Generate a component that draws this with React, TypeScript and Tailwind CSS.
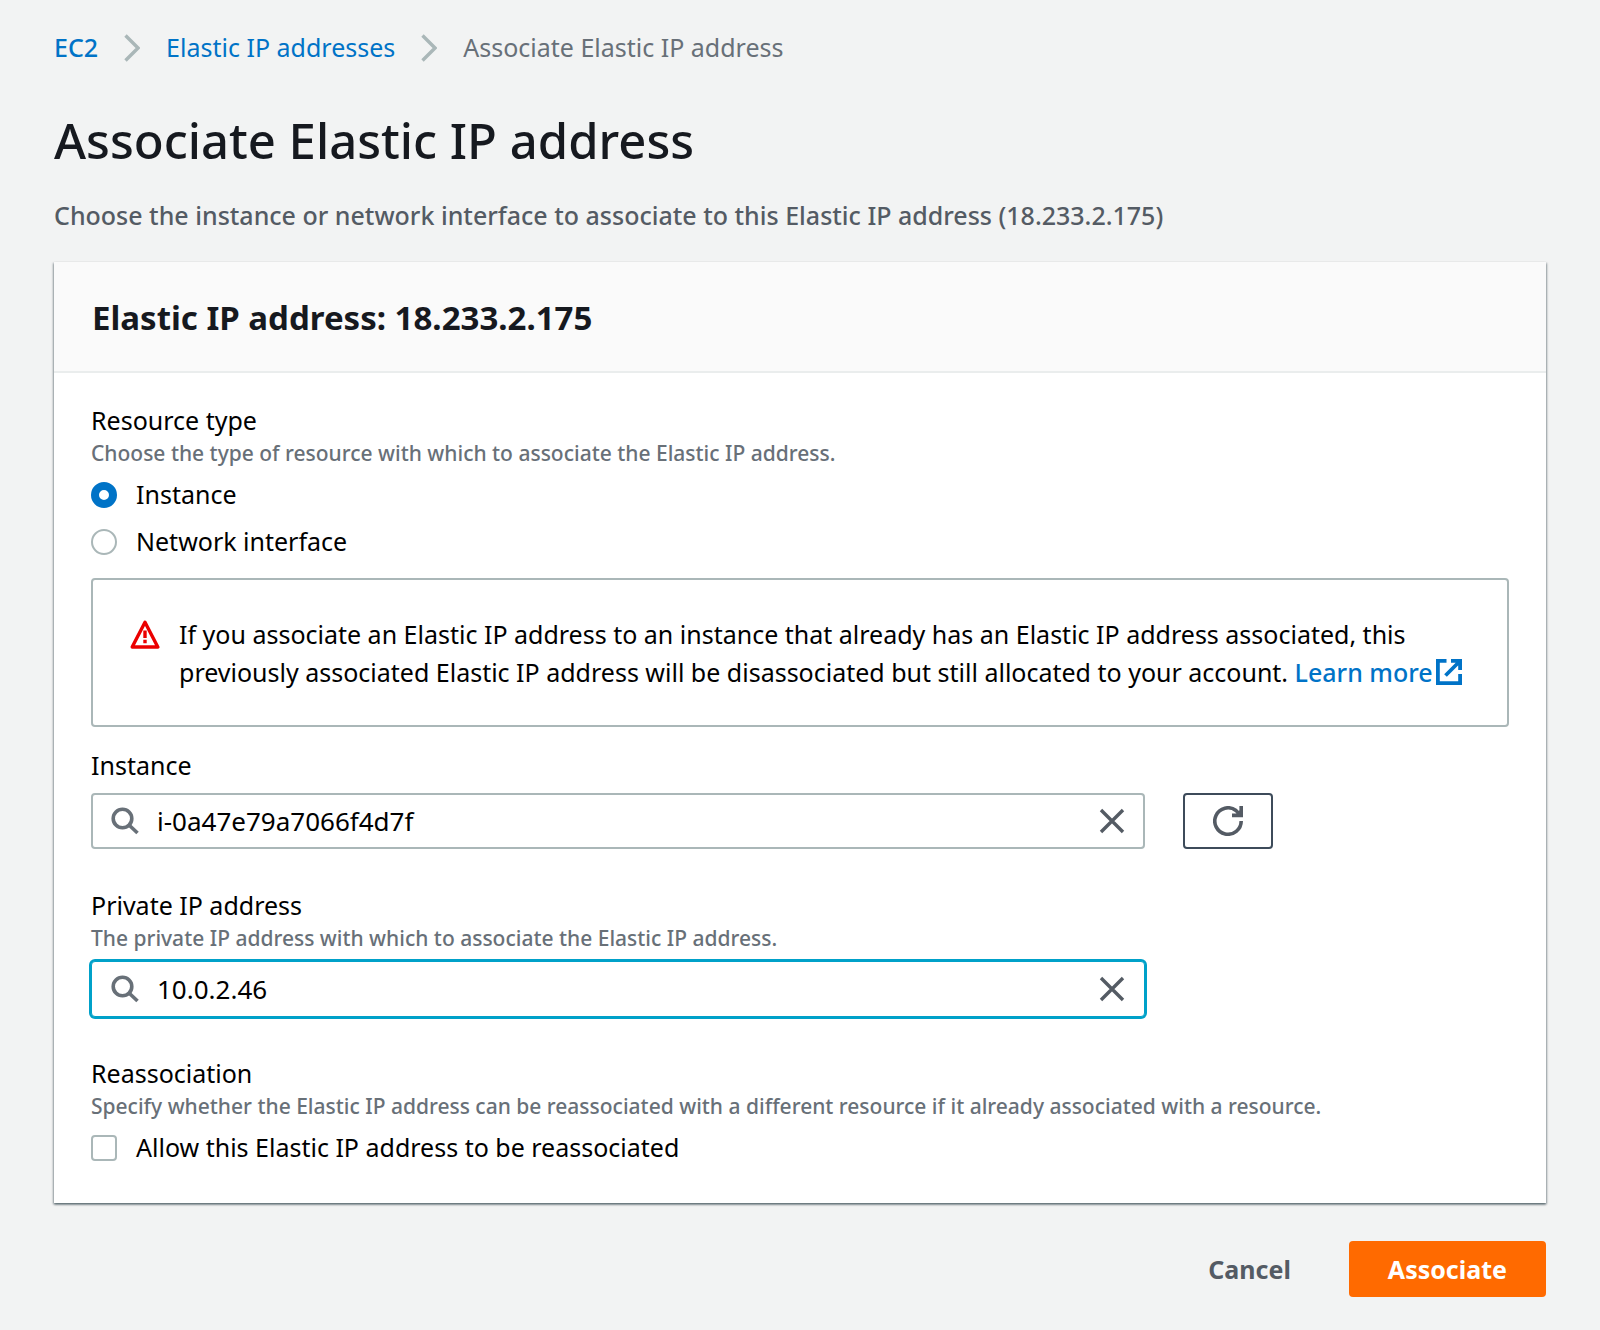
import { FC, ReactNode, useState } from "react";

const SearchIcon: FC = () => (
  <svg viewBox="0 0 28 28" className="w-7 h-7 shrink-0" fill="none" stroke="#687078" strokeWidth="3.6">
    <circle cx="11.5" cy="11.5" r="9.3" />
    <path d="M18 18l8.5 8" />
  </svg>
);

const CloseIcon: FC = () => (
  <svg viewBox="0 0 26 26" className="w-[26px] h-[26px]" fill="none" stroke="#545b64" strokeWidth="3.4">
    <path d="M2 2l22 22M24 2l-22 22" />
  </svg>
);

const RefreshIcon: FC = () => (
  <svg viewBox="0 0 30 30" className="w-[30px] h-[30px]" fill="none" stroke="#545b64" strokeWidth="3.6">
    <path d="M28.2 15A13.2 13.2 0 1 1 23 4.5l4 4" />
    <path d="M28.2 0v9.4H19" />
    <path d="M28 3v6h-6z" fill="#545b64" stroke="none" />
  </svg>
);

const WarningIcon: FC = () => (
  <svg viewBox="0 0 30 30" className="w-[30px] h-[30px] mt-1 shrink-0" fill="none" stroke="#eb0000" strokeWidth="3.4">
    <path d="M15 3.2L27.8 28H2.2z" strokeLinejoin="round" />
    <path d="M15 11.5v7.5M15 20.8v3.4" />
  </svg>
);

const ExternalIcon: FC = () => (
  <svg
    viewBox="0 0 26 26"
    className="inline-block w-[26px] h-[26px] ml-[3px] align-[-3px]"
    fill="none"
    stroke="#0073c7"
    strokeWidth="3.8"
  >
    <path d="M10.5 1.9H1.9v22.2h22.2V15" />
    <path d="M15 1.9h9.1V11M24 2L9.5 16.5" />
  </svg>
);

const Chevron: FC = () => (
  <svg viewBox="0 0 16 28" className="w-4 h-7" fill="none" stroke="#aab7b8" strokeWidth="3.4">
    <path d="M1.5 1.5L14 14L1.5 26.5" />
  </svg>
);

type SearchFieldProps = {
  id: string;
  value: string;
  onChange: (value: string) => void;
  focused?: boolean;
};

const SearchField: FC<SearchFieldProps> = ({ id, value, onChange, focused }) => (
  <div
    className={
      focused
        ? "col-span-3 flex items-center h-14 px-[19px] border border-[#00a1c9] ring-2 ring-[#00a1c9] rounded-sm bg-white"
        : "col-span-3 flex items-center h-14 px-[18px] border-2 border-[#aab7b8] rounded-sm bg-white"
    }
  >
    <SearchIcon />
    <input
      id={id}
      type="text"
      value={value}
      onChange={(e) => onChange(e.target.value)}
      className="flex-grow min-w-0 px-[18px] text-[26px] bg-transparent outline-none"
    />
    <button type="button" aria-label="Clear" onClick={() => onChange("")}>
      <CloseIcon />
    </button>
  </div>
);

const Hint: FC<{ children: ReactNode }> = ({ children }) => (
  <p className="text-[21px] leading-7 font-medium text-[#687078]">{children}</p>
);

export default function App() {
  const [resource, setResource] = useState("instance");
  const [instance, setInstance] = useState("i-0a47e79a7066f4d7f");
  const [privateIp, setPrivateIp] = useState("10.0.2.46");

  const resources = [
    { id: "instance", label: "Instance" },
    { id: "network", label: "Network interface" },
  ];

  return (
    <div className="min-h-screen bg-[#f2f3f3] px-[54px] pt-[29px] pb-8 font-['Noto_Sans',sans-serif] text-[25px] leading-[37px] text-black">
      <nav aria-label="Breadcrumb">
        <ol className="flex items-center gap-[26px] text-[#0073c7]">
          <li className="font-medium">
            <a href="#ec2">EC2</a>
          </li>
          <li aria-hidden="true">
            <Chevron />
          </li>
          <li>
            <a href="#addresses">Elastic IP addresses</a>
          </li>
          <li aria-hidden="true">
            <Chevron />
          </li>
          <li className="text-[#687078]">Associate Elastic IP address</li>
        </ol>
      </nav>

      <h1 className="mt-[41px] text-[49px] leading-[66px] font-medium text-[#16191f]">Associate Elastic IP address</h1>
      <p className="mt-6 font-medium text-[#545b64]">
        Choose the instance or network interface to associate to this Elastic IP address (18.233.2.175)
      </p>

      <form onSubmit={(e) => e.preventDefault()}>
        <section className="mt-7 bg-white shadow-[0_2px_2px_0_rgba(0,28,36,0.3),1px_1px_2px_0_rgba(0,28,36,0.3),-1px_1px_2px_0_rgba(0,28,36,0.3)]">
          <header className="px-[38px] pt-[37px] pb-[35px] bg-[#fafafa] border-b-2 border-[#eaeded]">
            <h2 className="text-[33px] font-bold text-[#16191f]">Elastic IP address: 18.233.2.175</h2>
          </header>

          <div className="px-[37px] pt-[29px] pb-[37px]">
            <fieldset>
              <legend>Resource type</legend>
              <Hint>Choose the type of resource with which to associate the Elastic IP address.</Hint>
              <div className="mt-[9px] flex flex-col gap-[10px]">
                {resources.map((item) => (
                  <label key={item.id} className="flex items-center gap-[19px]">
                    <input
                      type="radio"
                      name="resource"
                      checked={resource === item.id}
                      onChange={() => setResource(item.id)}
                      className="appearance-none w-[26px] h-[26px] rounded-full border-2 border-[#aab7b8] bg-white checked:border-8 checked:border-[#0073c7]"
                    />
                    {item.label}
                  </label>
                ))}
              </div>
            </fieldset>

            <div
              role="alert"
              className="mt-[18px] flex gap-[19px] px-[37px] pt-[35px] pb-[34px] border-2 border-[#aab7b8] rounded-sm"
            >
              <WarningIcon />
              <p className="leading-[38px]">
                If you associate an Elastic IP address to an instance that already has an Elastic IP address associated,
                this previously associated Elastic IP address will be disassociated but still allocated to your account.{" "}
                <a href="#learn-more" className="font-medium text-[#0073c7] whitespace-nowrap">
                  Learn more
                  <ExternalIcon />
                </a>
              </p>
            </div>

            <label htmlFor="instance" className="block mt-5">
              Instance
            </label>
            <div className="mt-[9px] grid grid-cols-4 gap-[38px]">
              <SearchField id="instance" value={instance} onChange={setInstance} />
              <button
                type="button"
                aria-label="Refresh"
                className="justify-self-start flex items-center justify-center w-[90px] h-14 border-2 border-[#3d4b5a] rounded-sm"
              >
                <RefreshIcon />
              </button>
            </div>

            <label htmlFor="private-ip" className="block mt-[38px]">
              Private IP address
            </label>
            <Hint>The private IP address with which to associate the Elastic IP address.</Hint>
            <div className="mt-[9px] grid grid-cols-4 gap-[38px]">
              <SearchField id="private-ip" value={privateIp} onChange={setPrivateIp} focused />
            </div>

            <fieldset className="mt-[38px]">
              <legend>Reassociation</legend>
              <Hint>
                Specify whether the Elastic IP address can be reassociated with a different resource if it already
                associated with a resource.
              </Hint>
              <label className="mt-[9px] flex items-center gap-[19px]">
                <input
                  type="checkbox"
                  className="appearance-none w-[26px] h-[26px] border-2 border-[#aab7b8] rounded-sm bg-white checked:bg-[#0073c7]"
                />
                Allow this Elastic IP address to be reassociated
              </label>
            </fieldset>
          </div>
        </section>

        <div className="mt-[38px] flex justify-end gap-5 font-bold">
          <button type="button" className="h-14 px-[38px] text-[#545b64]">
            Cancel
          </button>
          <button type="submit" className="h-14 px-[39px] bg-[#ff6a00] text-white rounded-sm">
            Associate
          </button>
        </div>
      </form>
    </div>
  );
}
